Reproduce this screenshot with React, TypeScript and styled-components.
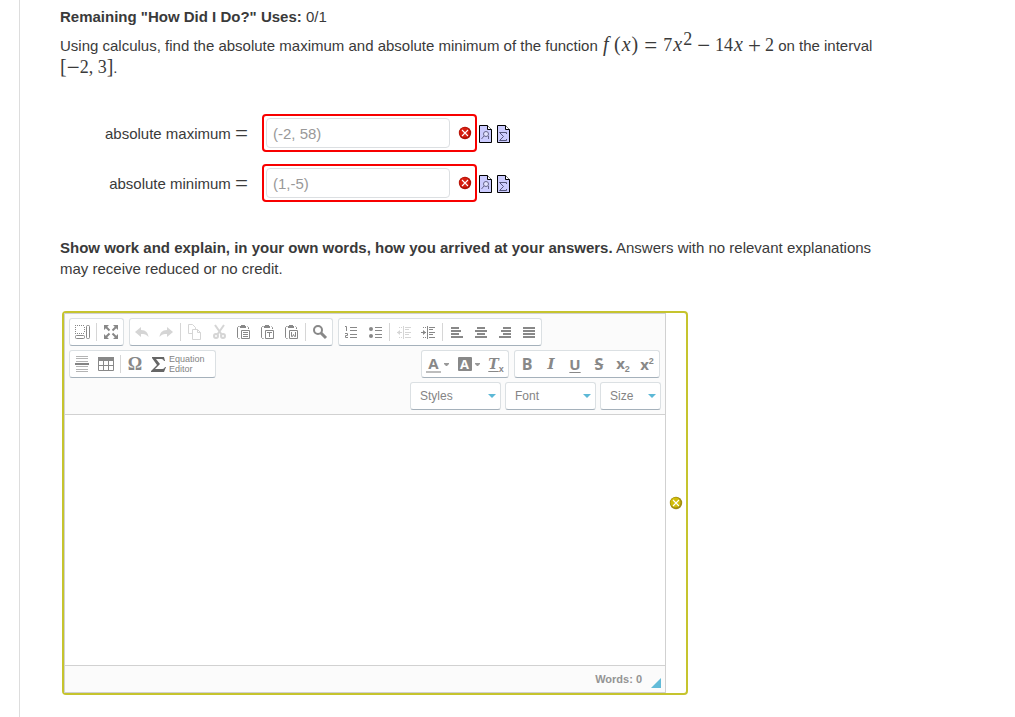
import React from "react";
import styled, { createGlobalStyle } from "styled-components";

const GlobalStyle = createGlobalStyle`
  *, *::before, *::after { box-sizing: border-box; }
  body {
    margin: 0;
    background: #fff;
    color: #3a3a3a;
    font: 15px/21px "Liberation Sans", Arial, sans-serif;
  }
`;

const Page = styled.main`
  min-height: 100vh;
  margin-left: 19px;
  padding: 6px 20px 22px 40px;
  border-left: 1px solid #ddd;
`;

const Prose = styled.p<{ $top?: number }>`
  max-width: 820px;
  margin: ${(p) => p.$top ?? 0}px 0 0;
`;

const MathText = styled.span`
  font: 18px/22px "Liberation Serif", "Times New Roman", serif;
  white-space: nowrap;
`;

const Var = styled.i<{ $after?: number }>`
  margin: 0 ${(p) => p.$after ?? 1}px 0 1px;
  font-size: 20px;
  line-height: 16px;
`;

const Op = styled.span<{ $gap?: number }>`
  margin: 0 ${(p) => p.$gap ?? 0}px;
  font-size: 23px;
  line-height: 16px;
  vertical-align: -2px;
`;

const Fence = styled.span`
  font-size: 20px;
  line-height: 16px;
`;

const Power = styled.sup`
  font-size: 18px;
  line-height: 0;
  vertical-align: 6px;
`;

const Answers = styled.div`
  display: flex;
  flex-direction: column;
  gap: 12px;
  margin: 36px 0 35px;
`;

const AnswerRow = styled.div`
  display: flex;
  align-items: center;
`;

const AnswerLabel = styled.label`
  width: 188px;
  margin-right: 14px;
  text-align: right;
  white-space: nowrap;
`;

const AnswerBox = styled.div`
  display: flex;
  align-items: center;
  gap: 8px;
  width: 215px;
  height: 38px;
  padding: 2px;
  border: 2px solid #f80000;
  border-radius: 4px;
`;

const AnswerInput = styled.input`
  flex: 1;
  min-width: 0;
  height: 30px;
  padding: 0 6px;
  border: 1px solid #dcdfe2;
  border-radius: 4px;
  background: #fff;
  color: #999;
  font: inherit;
  outline: none;
`;

const StatusIcon = styled.svg`
  flex: none;
  width: 14px;
  height: 14px;
  margin-right: 1px;
`;

const IconLink = styled.a`
  display: block;
  width: 13px;
  height: 18px;
  margin: 2px 3px 0 2px;
  svg { display: block; }
`;

const EditorFrame = styled.section`
  display: flex;
  align-items: center;
  width: 626px;
  max-width: 100%;
  margin: 32px 0 0 2px;
  padding-right: 2px;
  border: 2px solid #c6c42e;
  border-radius: 4px;
  background: #fff;
`;

const Editor = styled.div`
  flex: 1;
  min-width: 0;
  margin-right: 3px;
  border: 1px solid #d1d1d1;
`;

const Toolbar = styled.div`
  display: flex;
  flex-direction: column;
  gap: 4px;
  padding: 4px;
  border-bottom: 1px solid #d1d1d1;
  background: #fbfbfb;
`;

const ToolRow = styled.div<{ $combos?: boolean }>`
  display: flex;
  justify-content: ${(p) => (p.$combos ? "flex-end" : "flex-start")};
  gap: ${(p) => (p.$combos ? 4 : 5)}px;
  padding-right: ${(p) => (p.$combos ? 0 : 1)}px;
`;

const ToolGroup = styled.div<{ $push?: boolean }>`
  display: flex;
  align-items: center;
  height: 28px;
  margin-left: ${(p) => (p.$push ? "auto" : "0")};
  border: 1px solid #dbe0e3;
  border-bottom-color: #a5b1bb;
  border-radius: 3px;
  background: #fff;
`;

const ToolButton = styled.button<{ $width?: number; $faded?: boolean }>`
  display: flex;
  align-items: center;
  justify-content: center;
  gap: 3px;
  width: ${(p) => p.$width ?? 24}px;
  height: 26px;
  padding: 0;
  border: 0;
  background: none;
  opacity: ${(p) => (p.$faded ? 0.35 : 1)};
  svg { display: block; flex: none; }
`;

const EquationButton = styled(ToolButton)`
  justify-content: flex-start;
  padding-left: 4px;
`;

const Divider = styled.span`
  width: 1px;
  height: 18px;
  margin: 0 2px;
  background: #d6d6d6;
`;

const EquationText = styled.span`
  color: #848484;
  font: 9px/10px "Liberation Sans", Arial, sans-serif;
  text-align: left;
`;

const Combo = styled.div<{ $width: number }>`
  display: grid;
  align-items: center;
  width: ${(p) => p.$width}px;
  height: 28px;
  border: 1px solid #dbe0e3;
  border-bottom-color: #a5b1bb;
  border-radius: 3px;
  background: #fff;
  > * { grid-area: 1 / 1; }
  svg { justify-self: end; margin-right: 4px; pointer-events: none; }
`;

const ComboSelect = styled.select`
  appearance: none;
  width: 100%;
  height: 26px;
  padding: 0 16px 0 9px;
  border: 0;
  background: none;
  color: #848484;
  font: 12px/26px "Liberation Sans", Arial, sans-serif;
`;

const EditArea = styled.textarea`
  display: block;
  width: 100%;
  height: 250px;
  padding: 12px;
  border: 0;
  background: #fff;
  font: inherit;
  resize: none;
  outline: none;
`;

const Footer = styled.footer`
  display: flex;
  align-items: center;
  justify-content: flex-end;
  gap: 9px;
  height: 27px;
  padding-right: 4px;
  border-top: 1px solid #d1d1d1;
  background: #fbfbfb;
  color: #949494;
  font: bold 11px/26px "Liberation Sans", Arial, sans-serif;
  svg { margin-top: 8px; }
`;

type IconProps = { d?: string; fill?: string; color?: string; w?: number; children?: React.ReactNode };

const Icon = ({ d, fill, color = "#888", w = 1, children }: IconProps) => (
  <svg width="16" height="16" viewBox="0 0 16 16" fill="none" stroke={color} strokeWidth={w} aria-hidden="true">
    {d && <path d={d} />}
    {fill && <path d={fill} fill={color} stroke="none" />}
    {children}
  </svg>
);

const clipboard = "M4.5 2.5H3.5L2.5 3.5V13.5L3.5 14.5H4.5M12.5 2.5L13.5 3.5V5";
const clipTop = "M5 2H6V1H10V2H11V4H5Z";

const icons: Record<string, React.ReactNode> = {
  blocks: (
    <Icon>
      <path d="M1 1.5H11M1 9.500H11M1.500 3V9M10.500 3V9" strokeDasharray="1 1" />
      <rect x="1.5" y="11.500" width="9" height="3" rx="1" />
      <rect x="12.500" y="1.500" width="3" height="13" rx="1" />
    </Icon>
  ),
  maximize: <Icon d="M2.500 2.500L6.500 6.500M13.500 2.500L9.500 6.500M2.500 13.500L6.500 9.500M13.500 13.500L9.500 9.500" w={2} fill="M1 1H6L1 6ZM15 1H10L15 6ZM1 15H6L1 10ZM15 15H10L15 10Z" />,
  undo: <Icon fill="M1 8L7 3V6C12 6 14 9 14.500 13C12.500 10.500 10.500 10 7 10V13Z" />,
  redo: <Icon fill="M15 8L9 3V6C4 6 2 9 1.500 13C3.500 10.500 5.500 10 9 10V13Z" />,
  copy: <Icon d="M5.500 9.500H1.500V.5H5.500L8.500 3.500V5M5.500 5.500H10.500L13.500 8.500V15.500H5.500ZM10.500 5.500V8.500H13.500" />,
  cut: <Icon d="M4 1L11 11M13 1L6 11" w={2}><circle cx="5" cy="12" r="2" strokeWidth="2" /><circle cx="12" cy="12" r="2" strokeWidth="2" /></Icon>,
  paste: <Icon d={clipboard + "M6.500 6.500H14.500V14.500H6.500ZM8 8.500H13M8 10.500H13M8 12.500H13"} fill={clipTop} />,
  pasteText: <Icon d={clipboard + "M6.500 6.500H14.500V14.500H6.500ZM8 8.500H13M10.500 9V13"} fill={clipTop} />,
  pasteWord: <Icon d={clipboard + "M6.500 6.500H14.500V14.500H6.500ZM8.500 8V12.500H9.500L10.500 10.500L11.500 12.500H12.500V8"} fill={clipTop} />,
  find: <Icon><circle cx="6" cy="6" r="4" strokeWidth="2" /><path d="M9 9L14 14" strokeWidth="3" /></Icon>,
  numbered: <Icon d="M2 2.500H3.500V7M2 9.500H4.500V11.500H2.500V13.500H5M7 3.500H14M7 6.500H14M7 10.500H14M7 13.500H14" />,
  bulleted: <Icon d="M8 3.500H15M8 6.500H15M8 10.500H15M8 13.500H15"><circle cx="4" cy="5" r="2" fill="#888" stroke="none" /><circle cx="4" cy="12" r="2" fill="#888" stroke="none" /></Icon>,
  outdent: <Icon d="M1 8.500H6M7.500 2V15M9 3.500H15M9 5.500H13M9 8.500H15M9 10.500H13M9 13.500H15M3 3.500H4M5 3.500H6M3 13.500H4M5 13.500H6" fill="M1 8.500L4 6V11Z" />,
  indent: <Icon d="M1 8.500H6M7.500 2V15M9 3.500H15M9 5.500H13M9 8.500H15M9 10.500H13M9 13.500H15M3 3.500H4M5 3.500H6M3 13.500H4M5 13.500H6" fill="M6 8.500L3 6V11Z" />,
  left: <Icon fill="M2 3H10V5H2ZM2 6H12V8H2ZM2 9H10V11H2ZM2 12H14V14H2Z" />,
  center: <Icon fill="M4 3H12V5H4ZM2 6H14V8H2ZM4 9H12V11H4ZM2 12H14V14H2Z" />,
  right: <Icon fill="M6 3H14V5H6ZM4 6H14V8H4ZM6 9H14V11H6ZM2 12H14V14H2Z" />,
  justify: <Icon fill="M2 3H14V5H2ZM2 6H14V8H2ZM2 9H14V11H2ZM2 12H14V14H2Z" />,
  rule: <Icon color="#b4b4b4" d="M2 .5H14M2 2.500H14M2 5.500H14M2 10.500H14M2 13.500H14M2 15.500H14"><path d="M1 8H15" stroke="#848484" strokeWidth="2" /></Icon>,
  table: <Icon d="M.5 2.500H15.500V14.500H.5ZM5.500 5V14M10.500 5V14M1 9.500H15" fill="M0 1H16V5H0Z" />,
};

const Letter = styled.span<{ $italic?: boolean; $line?: string; $face?: string; $size?: number }>`
  color: #888;
  font-family: ${(p) => p.$face ?? '"Open Sans", sans-serif'};
  font-size: ${(p) => p.$size ?? 16}px;
  font-weight: bold;
  font-style: ${(p) => (p.$italic ? "italic" : "normal")};
  line-height: 16px;
  text-decoration: ${(p) => p.$line ?? "none"};
  text-decoration-thickness: 1px;
  text-underline-offset: 2px;
`;

const ColorLetter = styled(Letter)`
  width: 15px;
  border-bottom: 2px solid #bdbdbd;
  text-align: center;
`;

const FillLetter = styled(Letter)`
  width: 14px;
  height: 14px;
  border-radius: 1px;
  background: #888;
  color: #fff;
  line-height: 14px;
  text-align: center;
`;

const Small = styled.span<{ $up?: boolean }>`
  font: bold 9px/8px "Liberation Sans", Arial, sans-serif;
  vertical-align: ${(p) => (p.$up ? "6px" : "-3px")};
`;

const SLAB = '"DejaVu Serif", serif';

const Caret = () => (
  <svg width="5" height="3" viewBox="0 0 5 3" aria-hidden="true"><path d="M0 0H5V1L3 3H2L0 1Z" fill="#999" /></svg>
);

const ComboCaret = () => (
  <svg width="8" height="4" viewBox="0 0 8 4" aria-hidden="true"><path d="M0 0H8L4 4Z" fill="#5cb8d6" /></svg>
);

const Tool = ({ name, label, faded }: { name: string; label: string; faded?: boolean }) => (
  <ToolButton type="button" aria-label={label} $faded={faded}>{icons[name]}</ToolButton>
);

const Wrong = ({ tone, dark }: { tone: string; dark: string }) => (
  <StatusIcon viewBox="0 0 14 14" role="img" aria-label="Not correct">
    <circle cx="7" cy="7" r="6.200" fill={dark} />
    <circle cx="6.500" cy="6.500" r="5" fill={tone} />
    <path d="M4 4L10 10M10 4L4 10" stroke="#fff" strokeWidth="1.100" />
  </StatusIcon>
);

const Doc = ({ children }: { children: React.ReactNode }) => (
  <svg width="13" height="18" viewBox="0 0 13 18" fill="none" aria-hidden="true">
    <path d="M.5 .5H8.500L12.500 4.500V17.500H.5Z" fill="#ccf" stroke="#000" />
    <path d="M8.500 .5V4.500H12.500" fill="#fff" stroke="#000" />
    {children}
  </svg>
);

const Answer = ({ id, label, value }: { id: string; label: string; value: string }) => (
  <AnswerRow>
    <AnswerLabel htmlFor={id}>{label} <MathText><Op>=</Op></MathText></AnswerLabel>
    <AnswerBox>
      <AnswerInput id={id} defaultValue={value} />
      <Wrong tone="#d81e10" dark="#ad1006" />
    </AnswerBox>
    <IconLink href="#preview" aria-label="Preview answer">
      <Doc><circle cx="7" cy="9" r="2.500" fill="#e4e4ff" stroke="#66668c" /><path d="M5 11L2.500 14M9.500 11V14" stroke="#66668c" /></Doc>
    </IconLink>
    <IconLink href="#symbols" aria-label="Symbol formatting help">
      <Doc><path d="M9.500 9V7.500H2.500L6.500 11.500L2.500 15.500H9.500V14" stroke="#55557c" /></Doc>
    </IconLink>
  </AnswerRow>
);

export default function App() {
  return (
    <>
      <GlobalStyle />
      <Page>
        <Prose><b>Remaining "How Did I Do?" Uses:</b> 0/1</Prose>
        <Prose $top={7}>
          Using calculus, find the absolute maximum and absolute minimum of the function{" "}
          <MathText>
            <Var>f</Var> <Fence>(</Fence><Var>x</Var><Fence>)</Fence><Op $gap={6}>=</Op>7<Var>x</Var><Power>2</Power>
            <Op $gap={5}>−</Op>14<Var>x</Var><Op $gap={4}>+</Op>2
          </MathText>{" "}
          on the interval{" "}
          <MathText><Fence>[</Fence><Op>−</Op>2, 3<Fence>]</Fence></MathText>.
        </Prose>

        <Answers>
          <Answer id="max" label="absolute maximum" value="(-2, 58)" />
          <Answer id="min" label="absolute minimum" value="(1,-5)" />
        </Answers>

        <Prose>
          <b>Show work and explain, in your own words, how you arrived at your answers.</b>{" "}
          Answers with no relevant explanations may receive reduced or no credit.
        </Prose>

        <EditorFrame>
          <Editor>
            <Toolbar>
              <ToolRow>
                <ToolGroup>
                  <Tool name="blocks" label="Show Blocks" />
                  <Divider />
                  <Tool name="maximize" label="Maximize" />
                </ToolGroup>
                <ToolGroup>
                  <Tool name="undo" label="Undo" faded />
                  <Tool name="redo" label="Redo" faded />
                  <Divider />
                  <Tool name="copy" label="Copy" faded />
                  <Tool name="cut" label="Cut" faded />
                  <Tool name="paste" label="Paste" />
                  <Tool name="pasteText" label="Paste as plain text" />
                  <Tool name="pasteWord" label="Paste from Word" />
                  <Divider />
                  <Tool name="find" label="Find" />
                </ToolGroup>
                <ToolGroup>
                  <Tool name="numbered" label="Numbered List" />
                  <Tool name="bulleted" label="Bulleted List" />
                  <Divider />
                  <Tool name="outdent" label="Decrease Indent" faded />
                  <Tool name="indent" label="Increase Indent" />
                  <Divider />
                  <Tool name="left" label="Align Left" />
                  <Tool name="center" label="Center" />
                  <Tool name="right" label="Align Right" />
                  <Tool name="justify" label="Justify" />
                </ToolGroup>
              </ToolRow>
              <ToolRow>
                <ToolGroup>
                  <Tool name="rule" label="Horizontal Line" />
                  <Tool name="table" label="Table" />
                  <Divider />
                  <ToolButton type="button" aria-label="Special Character"><Letter $size={18} $face='"Liberation Serif", serif'>Ω</Letter></ToolButton>
                  <EquationButton type="button" $width={68}>
                    <svg width="15" height="15" viewBox="0 0 15 15" aria-hidden="true">
                      <path d="M1 0H13L14 4H13C12 2 11 2 9 2H5L9 7L4 12H10C12 12 13 12 14 10H15L13 15H0V14L6 8L1 1Z" fill="#666" />
                    </svg>
                    <EquationText>Equation<br />Editor</EquationText>
                  </EquationButton>
                </ToolGroup>
                <ToolGroup $push>
                  <ToolButton type="button" aria-label="Text Color" $width={31}><ColorLetter $size={15}>A</ColorLetter><Caret /></ToolButton>
                  <ToolButton type="button" aria-label="Background Color" $width={31}><FillLetter $size={13}>A</FillLetter><Caret /></ToolButton>
                  <ToolButton type="button" aria-label="Remove Format"><Letter $italic $face={SLAB} $line="underline" $size={14}>T<Small>x</Small></Letter></ToolButton>
                </ToolGroup>
                <ToolGroup>
                  <ToolButton type="button" aria-label="Bold"><Letter>B</Letter></ToolButton>
                  <ToolButton type="button" aria-label="Italic"><Letter $italic $face={SLAB} $size={15}>I</Letter></ToolButton>
                  <ToolButton type="button" aria-label="Underline"><Letter $line="underline" $size={15}>U</Letter></ToolButton>
                  <ToolButton type="button" aria-label="Strikethrough"><Letter $line="line-through">S</Letter></ToolButton>
                  <ToolButton type="button" aria-label="Subscript"><Letter $size={15}>x<Small>2</Small></Letter></ToolButton>
                  <ToolButton type="button" aria-label="Superscript"><Letter $size={15}>x<Small $up>2</Small></Letter></ToolButton>
                </ToolGroup>
              </ToolRow>
              <ToolRow $combos>
                <Combo $width={91}><ComboSelect aria-label="Styles"><option>Styles</option></ComboSelect><ComboCaret /></Combo>
                <Combo $width={91}><ComboSelect aria-label="Font"><option>Font</option></ComboSelect><ComboCaret /></Combo>
                <Combo $width={61}><ComboSelect aria-label="Size"><option>Size</option></ComboSelect><ComboCaret /></Combo>
              </ToolRow>
            </Toolbar>
            <EditArea aria-label="Explanation" />
            <Footer>
              Words: 0
              <svg width="10" height="10" viewBox="0 0 10 10" aria-hidden="true"><path d="M10 0V10H0Z" fill="#62bbd8" /></svg>
            </Footer>
          </Editor>
          <Wrong tone="#d2bd08" dark="#a08c10" />
        </EditorFrame>
      </Page>
    </>
  );
}
